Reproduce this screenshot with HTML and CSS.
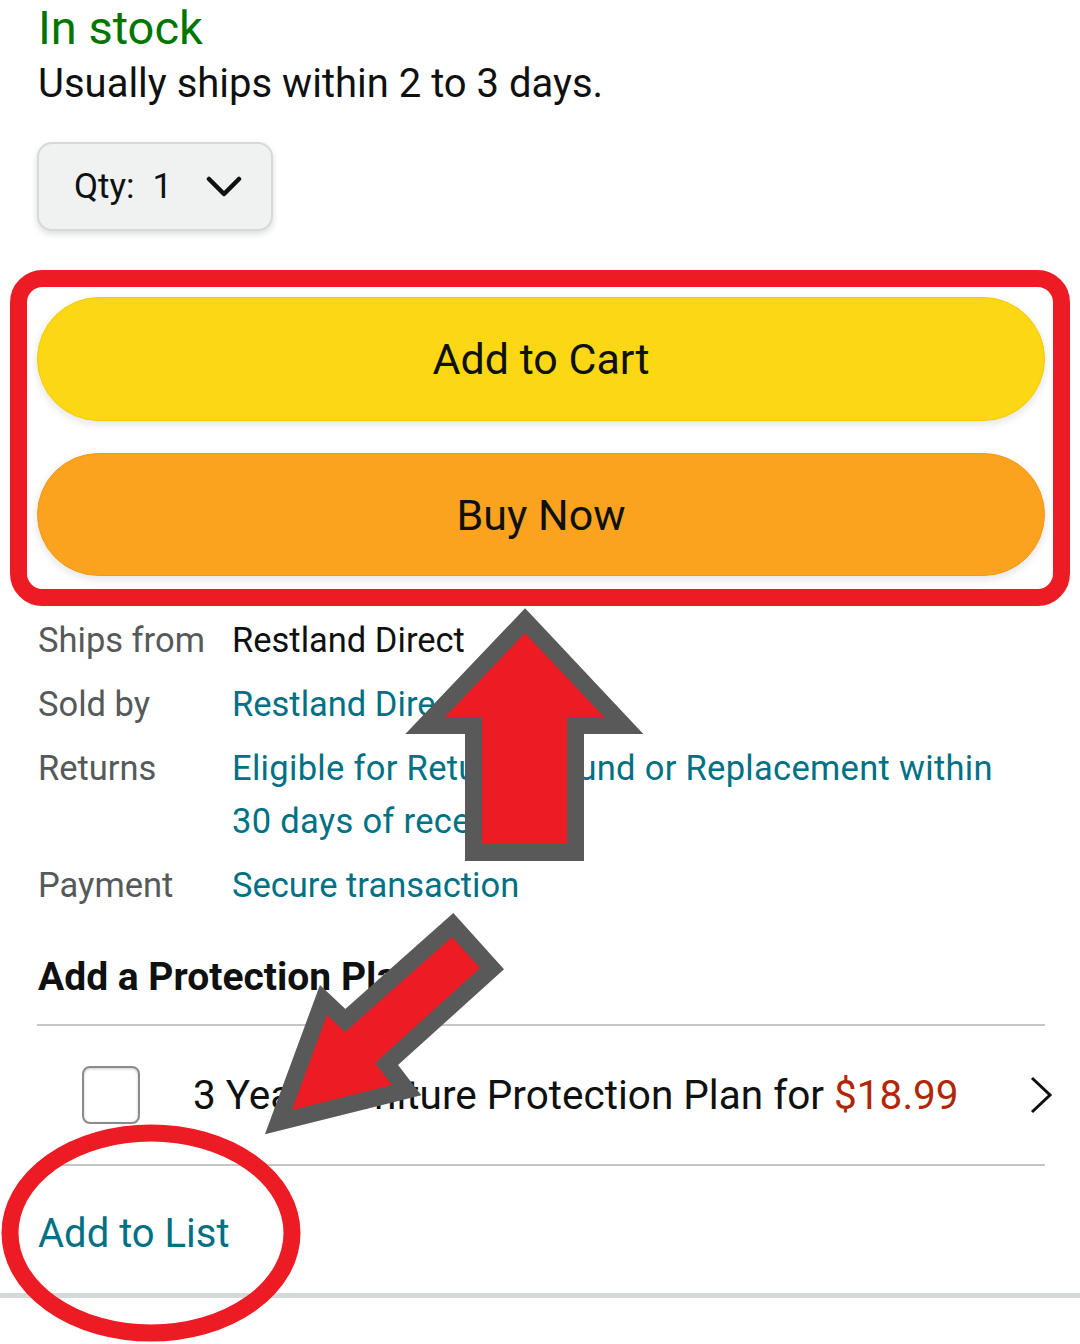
FILE: index.html
```html
<!DOCTYPE html>
<html lang="en">
<head>
<meta charset="utf-8">
<title>Buy box</title>
<link rel="stylesheet" href="styles.css">
</head>
<body>
<div class="screen">
  <div class="page">
    <div class="stock">In stock</div>
    <div class="ships">Usually ships within 2 to 3 days.</div>

    <div class="qty">
      <span class="qty-label">Qty:</span>
      <span class="qty-val">1</span>
      <svg class="qty-chev" width="36" height="22" viewBox="0 0 36 22"><path d="M3 3 L18 18 L33 3" fill="none" stroke="#0f1111" stroke-width="4.5" stroke-linecap="round" stroke-linejoin="round"/></svg>
    </div>

    <div class="buttons">
      <div class="btn btn-cart">Add to Cart</div>
      <div class="btn btn-buy">Buy Now</div>
    </div>

    <div class="details">
      <div class="lbl">Ships from</div>
      <div class="val">Restland Direct</div>
      <div class="lbl">Sold by</div>
      <div class="val link">Restland Direct</div>
      <div class="lbl">Returns</div>
      <div class="val link wrap">Eligible for Return, Refund or Replacement within 30 days of receipt</div>
      <div class="lbl">Payment</div>
      <div class="val link">Secure transaction</div>
    </div>

    <div class="prot-title">Add a Protection Plan:</div>
    <div class="prot-row">
      <span class="checkbox"></span>
      <span class="prot-text">3 Year Furniture Protection Plan for <span class="price">$18.99</span></span>
      <svg class="prot-chev" width="24" height="38" viewBox="0 0 24 38"><path d="M3 2 L21 19 L3 36" fill="none" stroke="#0f1111" stroke-width="3"/></svg>
    </div>
    <div class="add-list">Add to List</div>
  </div>
  <div class="thick-rule"></div>

  <svg class="annot" width="1080" height="1344" viewBox="0 0 1080 1344">
    <rect x="18.5" y="278.5" width="1043" height="319" rx="24" fill="none" stroke="#ed1c24" stroke-width="17"/>
    <polygon points="525,633 604,717 567,717 567,844 482,844 482,717 445,717" fill="#ed1c24" stroke="#595959" stroke-width="34" stroke-linejoin="miter" stroke-miterlimit="10" paint-order="stroke fill"/>
    <polygon points="452,937 480,968 375,1063 392,1085 292,1110 327,1015 345,1032" fill="#ed1c24" stroke="#595959" stroke-width="34" stroke-linejoin="miter" stroke-miterlimit="10" paint-order="stroke fill"/>
    <ellipse cx="151" cy="1233" rx="141" ry="100" fill="none" stroke="#ed1c24" stroke-width="17"/>
  </svg>
</div>
</body>
</html>
```

FILE: styles.css
```css
* { box-sizing: border-box; }
html, body { margin: 0; padding: 0; background: #fff; }
body {
  font-family: Roboto, "Noto Sans", Arial, sans-serif;
  color: #0f1111;
}
.screen {
  position: relative;
  width: 1080px;
  height: 1344px;
  overflow: hidden;
}
.page {
  padding: 0 35px 0 37px;
}
.stock {
  color: #007600;
  font-size: 47px;
  line-height: 56px;
  padding-left: 1px;
}
.ships {
  font-size: 40px;
  line-height: 56px;
  margin-top: 0;
  padding-left: 1px;
}
.qty {
  margin-top: 30px;
  width: 236px;
  height: 89px;
  background: #f0f2f2;
  border: 2px solid #d5d9d9;
  border-radius: 15px;
  box-shadow: 0 3px 6px rgba(15, 17, 17, 0.15);
  display: flex;
  align-items: center;
  padding-left: 35px;
  font-size: 35px;
}
.qty-val { margin-left: 18px; }
.qty-chev { margin-left: 34px; }
.buttons {
  margin-top: 66px;
  display: flex;
  flex-direction: column;
  gap: 32px;
}
.btn {
  width: 1008px;
  height: 124px;
  border-radius: 62px;
  display: flex;
  align-items: center;
  justify-content: center;
  font-size: 43px;
  color: #0f1111;
  box-shadow: 0 3px 8px rgba(15, 17, 17, 0.12);
}
.btn-cart { background: #fcd714; border: 1px solid #f7ca00; }
.btn-buy { background: #fba31f; border: 1px solid #f2991a; height: 123px; }
.details {
  margin-top: 38px;
  display: grid;
  grid-template-columns: 194px 1fr;
  row-gap: 11px;
  font-size: 34.5px;
  line-height: 53px;
  padding-left: 1px;
}
.lbl { color: #565959; }
.val { color: #0f1111; }
.link { color: #007185; }
.wrap { padding-right: 30px; letter-spacing: 0.3px; }
.prot-title {
  margin-top: 37px;
  font-size: 39px;
  font-weight: 700;
  line-height: 56px;
  padding-left: 1px;
  padding-bottom: 19px;
  border-bottom: 2px solid #c4c6c6;
}
.prot-row {
  height: 140px;
  display: flex;
  align-items: center;
  border-bottom: 2px solid #c4c6c6;
  padding-left: 45px;
}
.checkbox {
  width: 58px;
  height: 58px;
  border: 2px solid #888c8c;
  border-radius: 8px;
  box-shadow: inset 0 1px 3px rgba(0,0,0,0.2);
  flex: none;
}
.prot-text {
  margin-left: 53px;
  font-size: 40.5px;
}
.price { color: #b12704; }
.prot-chev {
  margin-left: auto;
  margin-right: -8px;
}
.add-list {
  color: #007185;
  font-size: 40px;
  line-height: 56px;
  padding: 40px 0 0 1px;
  height: 127px;
}
.thick-rule {
  height: 5px;
  background: #d5d9d9;
}
.annot {
  position: absolute;
  left: 0;
  top: 0;
  pointer-events: none;
}
```
